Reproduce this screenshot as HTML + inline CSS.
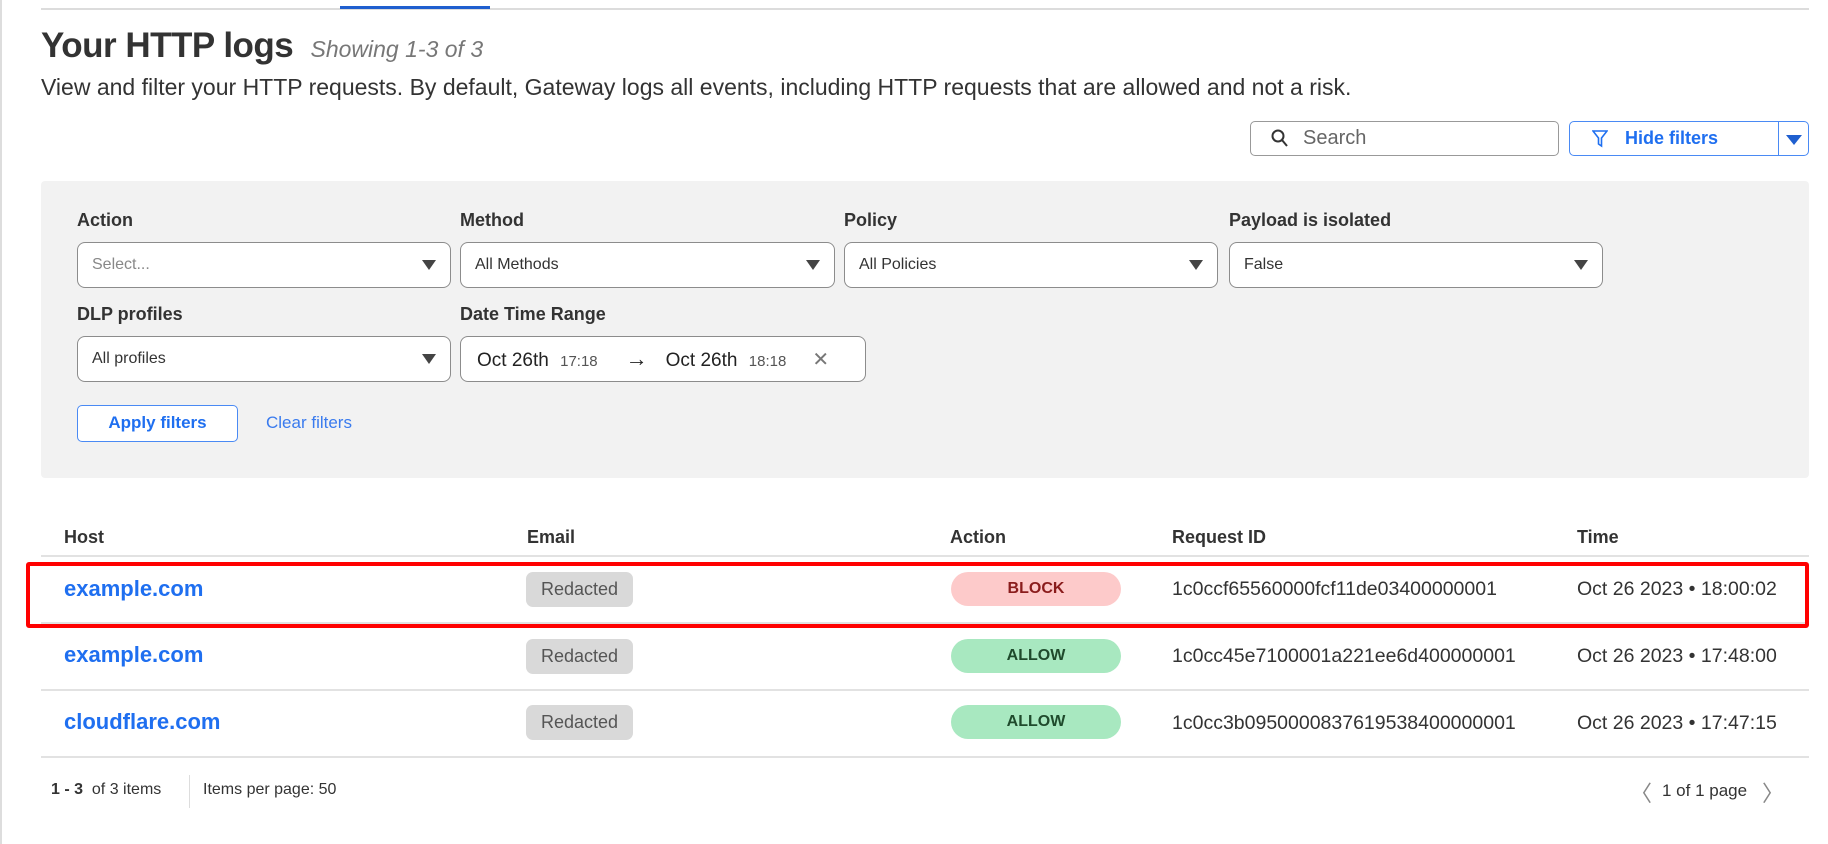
<!DOCTYPE html>
<html><head><meta charset="utf-8"><style>
*{box-sizing:border-box;margin:0;padding:0}
body{width:1828px;height:844px;background:#fff;font-family:"Liberation Sans",sans-serif;color:#222;position:relative;overflow:hidden}
.a{position:absolute;white-space:nowrap}
.lbl{font-size:18px;font-weight:600;color:#333}
.sel{position:absolute;height:46px;background:#fff;border:1.5px solid #8c8c8c;border-radius:8px;font-size:16px;color:#333;padding:0 14px;line-height:43px}
.sel:after{content:"";position:absolute;right:14px;top:17px;border-left:7px solid transparent;border-right:7px solid transparent;border-top:10px solid #444}
.th{font-size:18px;font-weight:600;color:#333}
.host{font-size:22px;font-weight:600;color:#1f6ff0}
.td{font-size:19.5px;color:#333}
.pill{position:absolute;border-radius:18px;font-size:16px;font-weight:700;text-align:center;line-height:33px;height:34px;width:170px}
.red{position:absolute;width:107px;height:35px;background:#d9d9d9;border-radius:7px;color:#555;font-size:18px;text-align:center;line-height:35px}
.hl{position:absolute;left:41px;width:1768px;height:2px;background:#e2e2e2}
</style></head><body>
<div class="a" style="left:0;top:0;width:2px;height:844px;background:#ddd"></div>
<div class="a" style="left:41px;top:8px;width:1768px;height:2px;background:#dcdcdc"></div>
<div class="a" style="left:340px;top:6px;width:150px;height:3px;background:#1f5fcf"></div>
<div class="a" style="left:41px;top:26px;font-size:35px;font-weight:600;color:#333;letter-spacing:-0.5px">Your HTTP logs <span style="font-size:23px;font-style:italic;font-weight:400;color:#777;margin-left:8px;letter-spacing:0">Showing 1-3 of 3</span></div>
<div class="a" style="left:41px;top:74px;font-size:23px;color:#333">View and filter your HTTP requests. By default, Gateway logs all events, including HTTP requests that are allowed and not a risk.</div>
<div class="a" style="left:1250px;top:121px;width:309px;height:35px;border:1.5px solid #999;border-radius:5px;font-size:20px;color:#666;padding-left:52px;line-height:33px">Search
<svg style="position:absolute;left:20px;top:7px" width="18" height="20" viewBox="0 0 18 20"><circle cx="7" cy="7" r="5.5" fill="none" stroke="#333" stroke-width="2"/><path d="M11 11l5 6" stroke="#333" stroke-width="2"/></svg></div>
<div class="a" style="left:1569px;top:121px;width:240px;height:35px;border:1.5px solid #4a8af4;border-radius:5px;font-size:18px;font-weight:600;color:#1f6ff0;line-height:32px;padding-left:55px">Hide filters
<svg style="position:absolute;left:22px;top:8px" width="16" height="18" viewBox="0 0 16 18"><path d="M1 1h14l-5.5 7v8l-3-2V8z" fill="none" stroke="#1f6ff0" stroke-width="1.6"/></svg>
<div style="position:absolute;left:208px;top:-1.5px;width:30px;height:35px;border-left:1.5px solid #4a8af4"></div>
<div style="position:absolute;left:216px;top:13px;border-left:8px solid transparent;border-right:8px solid transparent;border-top:10px solid #1f5fcf"></div></div>
<div class="a" style="left:41px;top:181px;width:1768px;height:297px;background:#f2f2f2;border-radius:4px"></div>
<div class="a lbl" style="left:77px;top:210px">Action</div>
<div class="a lbl" style="left:460px;top:210px">Method</div>
<div class="a lbl" style="left:844px;top:210px">Policy</div>
<div class="a lbl" style="left:1229px;top:210px">Payload is isolated</div>
<div class="sel" style="left:77px;top:242px;width:374px;color:#888">Select...</div>
<div class="sel" style="left:460px;top:242px;width:375px">All Methods</div>
<div class="sel" style="left:844px;top:242px;width:374px">All Policies</div>
<div class="sel" style="left:1229px;top:242px;width:374px">False</div>
<div class="a lbl" style="left:77px;top:304px">DLP profiles</div>
<div class="a lbl" style="left:460px;top:304px">Date Time Range</div>
<div class="sel" style="left:77px;top:336px;width:374px">All profiles</div>
<div class="a" style="left:460px;top:336px;width:406px;height:46px;background:#fff;border:1.5px solid #8c8c8c;border-radius:8px;font-size:19px;color:#222;line-height:43px;padding-left:16px">Oct 26th <span style="font-size:15px;color:#555;margin-left:6px">17:18</span><span style="margin:0 18px 0 28px;font-size:22px">→</span>Oct 26th <span style="font-size:15px;color:#555;margin-left:6px">18:18</span><span style="margin-left:26px;color:#777;font-size:20px">✕</span></div>
<div class="a" style="left:77px;top:405px;width:161px;height:37px;background:#fff;border:1.5px solid #4a8af4;border-radius:5px;font-size:17px;font-weight:600;color:#1f6ff0;text-align:center;line-height:34px">Apply filters</div>
<div class="a" style="left:266px;top:413px;font-size:17px;color:#3a7bee">Clear filters</div>
<div class="a th" style="left:64px;top:527px">Host</div>
<div class="a th" style="left:527px;top:527px">Email</div>
<div class="a th" style="left:950px;top:527px">Action</div>
<div class="a th" style="left:1172px;top:527px">Request ID</div>
<div class="a th" style="left:1577px;top:527px">Time</div>
<div class="hl" style="top:555px"></div>
<div class="hl" style="top:622px"></div>
<div class="hl" style="top:689px"></div>
<div class="hl" style="top:756px"></div>
<div class="a host" style="left:64px;top:576px">example.com</div>
<div class="a host" style="left:64px;top:642px">example.com</div>
<div class="a host" style="left:64px;top:709px">cloudflare.com</div>
<div class="red" style="left:526px;top:572px">Redacted</div>
<div class="red" style="left:526px;top:639px">Redacted</div>
<div class="red" style="left:526px;top:705px">Redacted</div>
<div class="pill" style="left:951px;top:572px;background:#fdcaca;color:#8a1c1c">BLOCK</div>
<div class="pill" style="left:951px;top:639px;background:#a8e8c0;color:#1f4a2c">ALLOW</div>
<div class="pill" style="left:951px;top:705px;background:#a8e8c0;color:#1f4a2c">ALLOW</div>
<div class="a td" style="left:1172px;top:578px">1c0ccf65560000fcf11de03400000001</div>
<div class="a td" style="left:1172px;top:645px">1c0cc45e7100001a221ee6d400000001</div>
<div class="a td" style="left:1172px;top:712px">1c0cc3b0950000837619538400000001</div>
<div class="a td" style="left:1577px;top:578px">Oct 26 2023 • 18:00:02</div>
<div class="a td" style="left:1577px;top:645px">Oct 26 2023 • 17:48:00</div>
<div class="a td" style="left:1577px;top:712px">Oct 26 2023 • 17:47:15</div>
<div class="a" style="left:26px;top:562px;width:1783px;height:66px;border:4.5px solid #f00;border-radius:3px"></div>
<div class="a" style="left:51px;top:781px;font-size:16px;color:#333"><b>1 - 3</b>&nbsp; of 3 items</div>
<div class="a" style="left:189px;top:775px;width:1px;height:33px;background:#ddd"></div>
<div class="a" style="left:203px;top:781px;font-size:16px;color:#333">Items per page: 50</div>
<div class="a" style="left:1630px;top:776px;font-size:22px;color:#888">〈</div>
<div class="a" style="left:1662px;top:781px;font-size:17px;color:#333">1 of 1 page</div>
<div class="a" style="left:1762px;top:776px;font-size:22px;color:#888">〉</div>
</body></html>
